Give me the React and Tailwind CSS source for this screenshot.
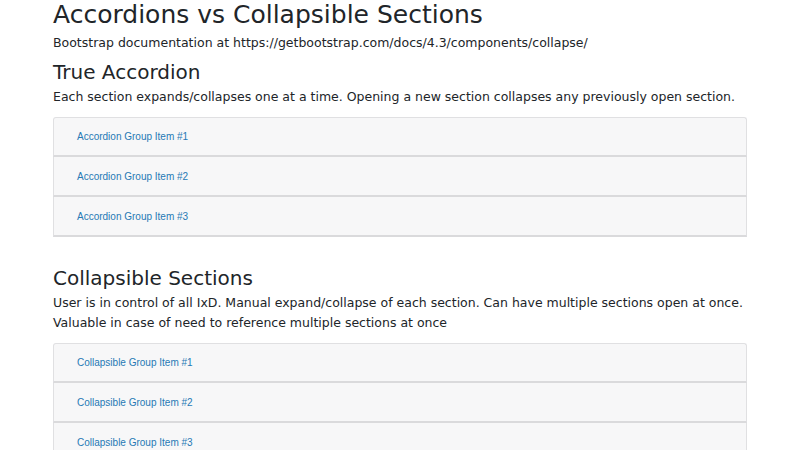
const accordionItems = ['Accordion Group Item #1', 'Accordion Group Item #2', 'Accordion Group Item #3'];
const collapsibleItems = ['Collapsible Group Item #1', 'Collapsible Group Item #2', 'Collapsible Group Item #3'];

function CardGroup({ items }) {
  return (
    <div className="flex flex-col">
      {items.map((label, i) => (
        <div
          key={label}
          className={`flex h-[40px] items-center border-x border-b-2 border-[#e0e0e2] border-b-[#dadadc] bg-[#f7f7f8] pl-[23px] ${
            i === 0 ? 'rounded-t-[3px] border-t' : ''
          }`}
        >
          <span className="text-[10px] text-[#2679b5]" style={{ fontFamily: '"Liberation Sans", Arial, sans-serif' }}>
            {label}
          </span>
        </div>
      ))}
    </div>
  );
}

export default function App() {
  return (
    <div
      className="h-[450px] w-[800px] overflow-hidden bg-white text-[#212529]"
      style={{ fontFamily: '"DejaVu Sans", sans-serif' }}
    >
      <div className="mx-auto w-[694px]">
        <h1 className="text-[25px] leading-[30px]">Accordions vs Collapsible Sections</h1>
        <p className="mt-[3px] text-[12.5px] leading-[20px]">
          Bootstrap documentation at https://getbootstrap.com/docs/4.3/components/collapse/
        </p>
        <h2 className="mt-[5px] text-[20px] leading-[28px]">True Accordion</h2>
        <p className="mt-[1px] text-[12.5px] leading-[20px]">
          Each section expands/collapses one at a time. Opening a new section collapses any previously open section.
        </p>
        <div className="mt-[10px]">
          <CardGroup items={accordionItems} />
        </div>

        <h2 className="mt-[27px] text-[20px] leading-[28px]">Collapsible Sections</h2>
        <p className="mt-[1px] text-[12.5px] leading-[20px]">
          User is in control of all IxD. Manual expand/collapse of each section. Can have multiple sections open at once.
          <br />
          Valuable in case of need to reference multiple sections at once
        </p>
        <div className="mt-[10px]">
          <CardGroup items={collapsibleItems} />
        </div>
      </div>
    </div>
  );
}
